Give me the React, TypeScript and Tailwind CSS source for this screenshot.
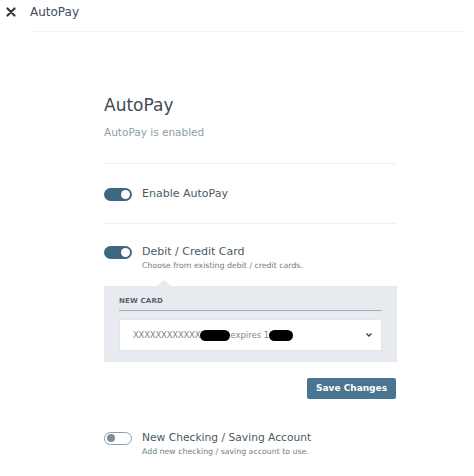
import React from "react";

const Toggle = ({ on }: { on: boolean }) =>
  on ? (
    <div className="w-[28px] h-[13px] rounded-full bg-[#3e6783] flex items-center justify-end pr-[2px] shrink-0">
      <div className="w-[9px] h-[9px] rounded-full bg-white"></div>
    </div>
  ) : (
    <div className="w-[28px] h-[13px] rounded-full border-[1.5px] border-[#8aa0af] bg-white flex items-center pl-[1.5px] shrink-0">
      <div className="w-[8px] h-[8px] rounded-full bg-[#7d909e]"></div>
    </div>
  );

const Blob = ({ w }: { w: string }) => (
  <span className={`inline-block h-[11px] ${w} rounded-full bg-black`}></span>
);

export default function App() {
  return (
    <div
      className="w-[474px] h-[476px] bg-white overflow-hidden"
      style={{ fontFamily: '"DejaVu Sans", "Open Sans", sans-serif' }}
    >
      {/* Header */}
      <div className="flex items-center h-[24px] pl-[6px]">
        <svg width="10" height="10" viewBox="0 0 10 10" className="shrink-0">
          <path d="M1.5 1.5 L8.5 8.5 M8.5 1.5 L1.5 8.5" stroke="#2f3a42" strokeWidth="2.2" strokeLinecap="round" />
        </svg>
        <span className="ml-[14px] text-[12px] text-[#3f4d57]">AutoPay</span>
      </div>
      <div className="mt-[7px] ml-[30px] mr-[11px] h-px bg-[#f0f1f2]"></div>

      {/* Content */}
      <div className="ml-[104px] w-[293px] flex flex-col">
        <h1 className="mt-[63px] text-[17px] leading-[20px] text-[#3d4b55]">AutoPay</h1>
        <p className="mt-[10px] text-[10.5px] leading-[14px] text-[#8d9ea9]">AutoPay is enabled</p>

        <div className="mt-[24px] h-px bg-[#eef0f1]"></div>

        <div className="mt-[23px] h-[14px] flex items-center gap-[10px]">
          <Toggle on />
          <span className="text-[11px] text-[#4a5a65]">Enable AutoPay</span>
        </div>

        <div className="mt-[22px] h-px bg-[#eef0f1]"></div>

        <div className="mt-[20px] flex gap-[10px]">
          <div className="h-[16px] flex items-center">
            <Toggle on />
          </div>
          <div>
            <div className="text-[11px] leading-[16px] text-[#4a5a65]">Debit / Credit Card</div>
            <div className="text-[7.8px] leading-[12px] text-[#6f7d87]">Choose from existing debit / credit cards.</div>
          </div>
        </div>

        {/* Panel pointer */}
        <div className="mt-[8px] ml-[53px] w-0 h-0 border-x-[7px] border-x-transparent border-b-[6px] border-b-[#e7ebef]"></div>
        <div className="bg-[#e7ebef] px-[15px] pt-[10px] pb-[11px]">
          <div className="text-[7px] leading-[10px] font-bold tracking-wide text-[#55636d]">NEW CARD</div>
          <div className="mt-[4px] h-px bg-[#9fb0bd]"></div>
          <div className="mt-[8px] h-[32px] bg-white border border-[#e1e5e9] flex items-center pl-[13px] pr-[8px]">
            <span className="text-[8.5px] text-[#7c8890] tracking-tight">XXXXXXXXXXXX</span>
            <Blob w="w-[30px]" />
            <span className="text-[8.5px] text-[#7c8890]">expires 1</span>
            <Blob w="w-[24px]" />
            <svg width="8" height="6" viewBox="0 0 8 6" className="ml-auto">
              <path d="M1.5 1.5 L4 4 L6.5 1.5" stroke="#3a4650" strokeWidth="1.4" fill="none" />
            </svg>
          </div>
        </div>

        <button className="mt-[16px] self-end mr-[1px] w-[89px] h-[21px] rounded-[2px] bg-[#4a7590] text-white text-[9px] font-bold">
          Save Changes
        </button>

        <div className="mt-[31px] flex gap-[10px]">
          <div className="h-[16px] flex items-center">
            <Toggle on={false} />
          </div>
          <div>
            <div className="text-[10.7px] leading-[16px] text-[#4a5a65]">New Checking / Saving Account</div>
            <div className="text-[7.8px] leading-[12px] text-[#6f7d87]">Add new checking / saving account to use.</div>
          </div>
        </div>
      </div>
    </div>
  );
}
